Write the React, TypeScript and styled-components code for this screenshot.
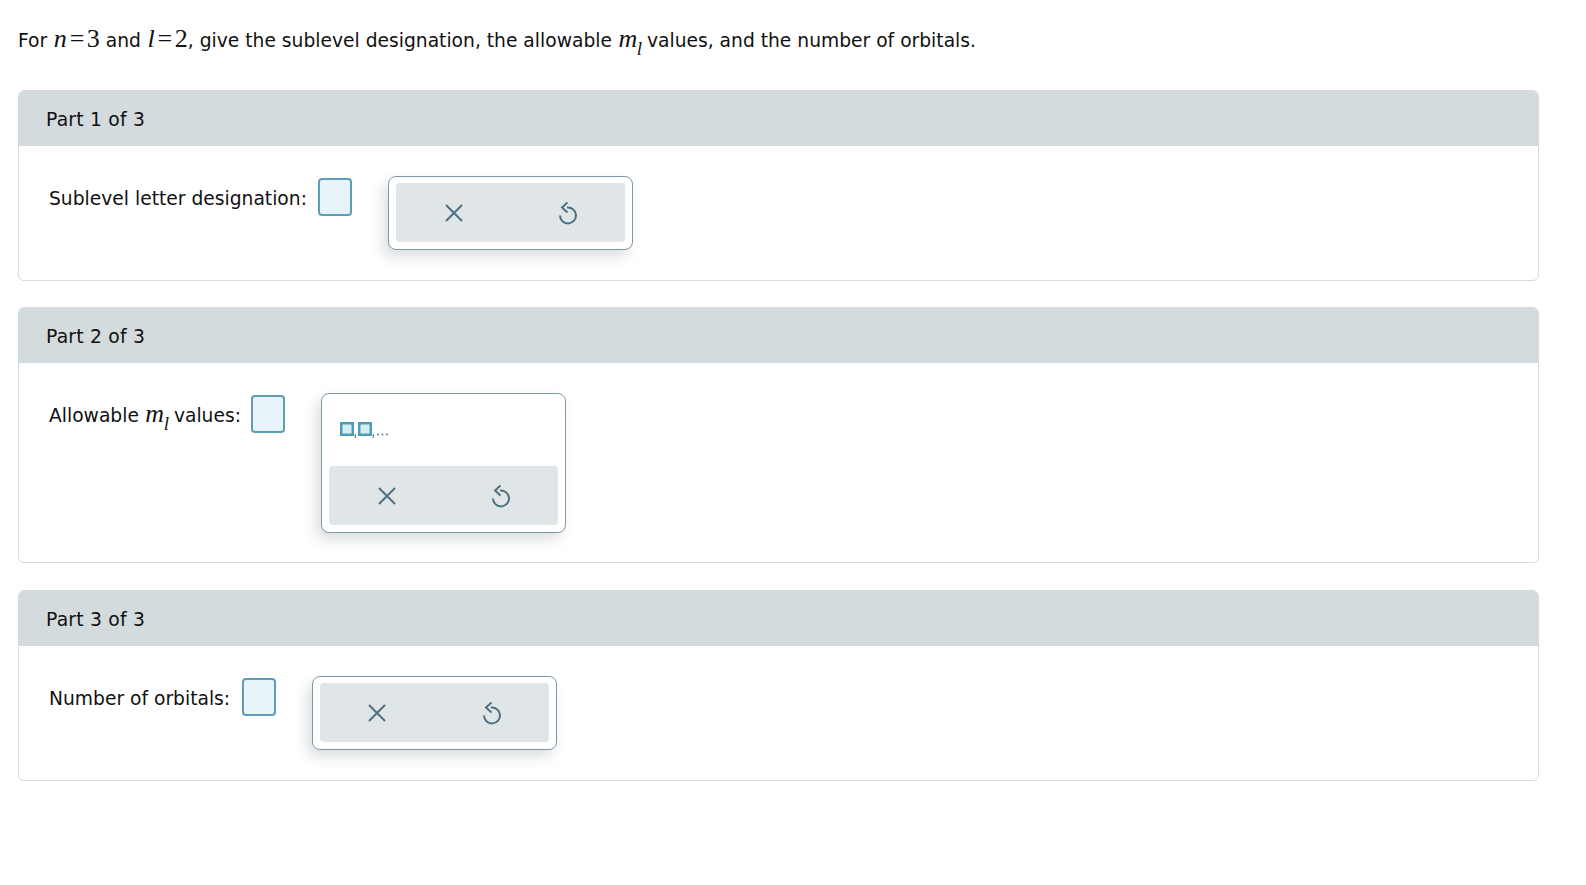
import styled, { createGlobalStyle } from 'styled-components';

const GlobalStyle = createGlobalStyle`
  html, body {
    margin: 0;
    padding: 0;
    background: #fff;
  }
  body {
    font-family: "DejaVu Sans", Verdana, sans-serif;
    color: #111;
  }
`;

const Page = styled.div`
  width: 1586px;
  height: 885px;
  box-sizing: border-box;
  padding: 26px 47px 0 18px;
  overflow: hidden;
`;

const Question = styled.div`
  font-size: 18.7px;
  line-height: 30px;
  height: 64px;
  white-space: nowrap;
`;

const Mi = styled.i`
  font-family: "Liberation Serif", serif;
  font-size: 26px;
  line-height: 20px;
  margin: 0 0.5px;
`;

const Mn = styled.span`
  font-family: "Liberation Serif", serif;
  font-size: 26px;
  line-height: 20px;
`;

const Eq = styled.span`
  margin: 0 2.5px;
`;

const Sub = styled.i`
  font-family: "Liberation Serif", serif;
  font-size: 19px;
  line-height: 10px;
  position: relative;
  top: 8px;
  margin-right: 5px;
  margin-left: -1px;
`;

const Card = styled.section<{ $after: number }>`
  border: 1px solid #d3dbde;
  border-radius: 6px;
  margin-bottom: ${(p) => p.$after}px;
  overflow: hidden;
`;

const CardHeader = styled.div`
  background: #d3dbde;
  height: 56px;
  box-sizing: border-box;
  margin: -1px -1px 0;
  padding: 2px 0 0 28px;
  display: flex;
  align-items: center;
  font-size: 18.75px;
  letter-spacing: 0.2px;
`;

const CardBody = styled.div<{ $tail: number }>`
  display: flex;
  align-items: flex-start;
  padding: 30px 0 ${(p) => p.$tail}px 30px;
`;

const Label = styled.div`
  font-size: 18.7px;
  line-height: 30px;
  margin-top: 8px;
  white-space: nowrap;
`;

const AnswerBox = styled.div<{ $gap: number }>`
  width: 34px;
  height: 38px;
  box-sizing: border-box;
  margin: 2px 36px 0 ${(p) => p.$gap}px;
  background: #e8f4f9;
  border: 2px solid #5c9fb5;
  border-radius: 4px;
`;

const Popover = styled.div`
  width: 245px;
  box-sizing: border-box;
  background: #fff;
  border: 1px solid #7f98a3;
  border-radius: 8px;
  padding: 6px 7px 7px;
  box-shadow: -5px 7px 13px rgba(60, 85, 95, 0.18);
`;

const Palette = styled.div`
  height: 66px;
  padding: 22px 0 0 11px;
  box-sizing: border-box;
`;

const ActionBar = styled.div`
  height: 59px;
  background: #e0e5e7;
  border-radius: 4px;
  display: flex;
  align-items: center;
`;

const Action = styled.div`
  flex: 1;
  display: flex;
  align-items: center;
  justify-content: center;
`;

const CloseIcon = () => (
  <svg width="22" height="22" viewBox="0 0 22 22" fill="none" stroke="#4d7180" strokeWidth="2">
    <path d="M3 3 L19 19 M19 3 L3 19" />
  </svg>
);

const UndoIcon = () => (
  <svg width="22" height="24" viewBox="0 0 22 24" fill="none" stroke="#4d7180" strokeWidth="2">
    <path d="M10 6.5 A8 8 0 1 1 3 14.5" />
    <path d="M10.5 1.5 L5 6.5 L10.5 11.5" />
  </svg>
);

const ListIcon = () => (
  <svg width="52" height="20" viewBox="0 0 52 20">
    <rect x="1.25" y="1.25" width="11.5" height="11.5" fill="#d8eef4" stroke="#4b9db6" strokeWidth="2.5" />
    <rect x="19.25" y="1.25" width="11.5" height="11.5" fill="#d8eef4" stroke="#4b9db6" strokeWidth="2.5" />
    <path d="M15.5 12 L15 16 M33.5 12 L33 16" stroke="#4d7180" strokeWidth="1" fill="none" />
    <circle cx="38" cy="12.5" r="0.9" fill="#4d7180" />
    <circle cx="42.5" cy="12.5" r="0.9" fill="#4d7180" />
    <circle cx="47" cy="12.5" r="0.9" fill="#4d7180" />
  </svg>
);

const Actions = () => (
  <ActionBar>
    <Action>
      <CloseIcon />
    </Action>
    <Action>
      <UndoIcon />
    </Action>
  </ActionBar>
);

const App = () => (
  <Page>
    <GlobalStyle />
    <Question>
      For <Mi>n</Mi>
      <Mn>
        <Eq>=</Eq>3
      </Mn>{' '}
      and <Mi>l</Mi>
      <Mn>
        <Eq>=</Eq>2
      </Mn>
      , give the sublevel designation, the allowable <Mi>m</Mi>
      <Sub>l</Sub>values, and the number of orbitals.
    </Question>

    <Card $after={26}>
      <CardHeader>Part 1 of 3</CardHeader>
      <CardBody $tail={30}>
        <Label>Sublevel letter designation:</Label>
        <AnswerBox $gap={11.5} />
        <Popover>
          <Actions />
        </Popover>
      </CardBody>
    </Card>

    <Card $after={27}>
      <CardHeader>Part 2 of 3</CardHeader>
      <CardBody $tail={29}>
        <Label>
          Allowable <Mi>m</Mi>
          <Sub>l</Sub>values:
        </Label>
        <AnswerBox $gap={10.5} />
        <Popover>
          <Palette>
            <ListIcon />
          </Palette>
          <Actions />
        </Popover>
      </CardBody>
    </Card>

    <Card $after={26}>
      <CardHeader>Part 3 of 3</CardHeader>
      <CardBody $tail={30}>
        <Label>Number of orbitals:</Label>
        <AnswerBox $gap={12} />
        <Popover>
          <Actions />
        </Popover>
      </CardBody>
    </Card>
  </Page>
);

export default App;
